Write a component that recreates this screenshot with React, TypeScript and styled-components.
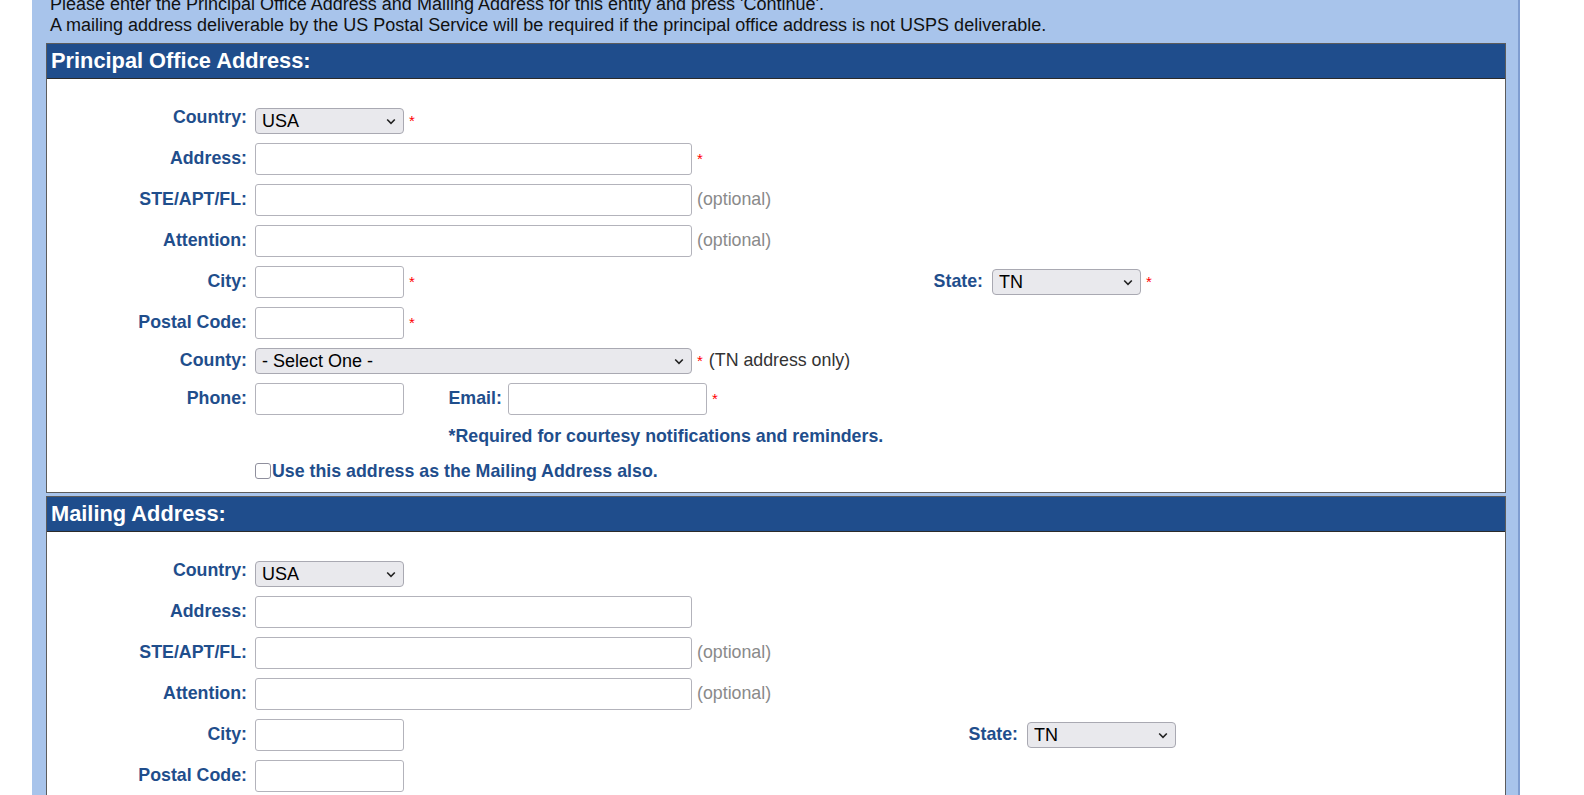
import React from 'react'
import styled, { createGlobalStyle } from 'styled-components'

const GlobalStyle = createGlobalStyle`
    html, body {
        margin: 0;
        padding: 0;
        background: #fff;
    }
    body {
        font-family: 'Liberation Sans', Arial, sans-serif;
    }
`

const Page = styled.div`
    margin-top: -6px;
    margin-left: 32px;
    width: 1488px;
    box-sizing: border-box;
    padding: 0 12px 60px 14px;
    background: #a8c4eb;
    border-right: 2px solid #7f9dd0;
`

const Intro = styled.div`
    padding-left: 4px;
    margin-bottom: 7.5px;
    font-size: 18px;
    line-height: 20.5px;
    color: #111;
`

const Section = styled.section`
    background: #fff;
    border: 1px solid #5c5c5c;
    margin-bottom: 3px;
`

const SectionHeader = styled.h2`
    margin: 0;
    height: 34px;
    line-height: 34px;
    padding-left: 4px;
    background: #1f4d8c;
    border-bottom: 1px solid #2b2b2b;
    color: #fff;
    font-size: 21.8px;
    font-weight: bold;
`

const SectionBody = styled.div`
    padding: 24.5px 0 2.5px 0;
`

const Row = styled.div<{ $h: number }>`
    display: flex;
    align-items: center;
    height: ${p => p.$h}px;
`

const Label = styled.label<{ $lift?: number }>`
    flex-shrink: 0;
    width: 208px;
    box-sizing: border-box;
    padding-right: 8px;
    text-align: right;
    font-size: 17.8px;
    font-weight: bold;
    color: #1f4e8c;
    position: relative;
    top: ${p => -(p.$lift || 0)}px;
`

const Cell = styled.div<{ $w: number }>`
    flex-shrink: 0;
    display: flex;
    align-items: center;
    width: ${p => p.$w}px;
`

const InlineLabel = styled.label<{ $w?: number }>`
    flex-shrink: 0;
    box-sizing: border-box;
    width: ${p => (p.$w ? `${p.$w}px` : 'auto')};
    padding-right: ${p => (p.$w ? 9 : 6)}px;
    text-align: right;
    font-size: 17.8px;
    font-weight: bold;
    color: #1f4e8c;
`

const TextInput = styled.input<{ $w: number }>`
    flex-shrink: 0;
    width: ${p => p.$w}px;
    height: 32px;
    box-sizing: border-box;
    margin: 0;
    border: 1px solid #b3b3bb;
    border-radius: 3px;
    background: #fff;
    font-size: 17px;
    font-family: inherit;
`

const SelectBox = styled.div<{ $w: number }>`
    position: relative;
    flex-shrink: 0;
    width: ${p => p.$w}px;
    height: 26px;
`

const Select = styled.select`
    appearance: none;
    width: 100%;
    height: 100%;
    box-sizing: border-box;
    margin: 0;
    padding: 0 24px 0 6px;
    border: 1px solid #a9a9b2;
    border-radius: 4px;
    background: #e9e9ed;
    color: #000;
    font-size: 18px;
    font-family: 'Liberation Sans', Arial, sans-serif;
`

const Chevron = styled.svg`
    position: absolute;
    right: 8px;
    top: 10px;
    width: 10px;
    height: 7px;
    pointer-events: none;
`

const Req = styled.span`
    margin-left: 5px;
    font-size: 15px;
    line-height: 1;
    color: #f00;
`

const Hint = styled.span<{ $dark?: boolean }>`
    margin-left: ${p => (p.$dark ? 6 : 5)}px;
    font-size: 17.8px;
    color: ${p => (p.$dark ? '#333' : '#8a8a8a')};
    white-space: nowrap;
`

const Note = styled.div`
    margin-left: 193.5px;
    font-size: 17.8px;
    font-weight: bold;
    color: #1f4e8c;
`

const CheckLine = styled.label`
    display: flex;
    align-items: center;
    font-size: 17.8px;
    font-weight: bold;
    color: #1f4e8c;
`

const CheckBox = styled.input`
    appearance: none;
    margin: 0 1px 0 0;
    width: 16px;
    height: 16px;
    box-sizing: border-box;
    border: 1.5px solid #8f8f9d;
    border-radius: 3px;
    background: #fff;
`

const Spacer = styled.div`
    width: 208px;
    flex-shrink: 0;
`

const Dropdown: React.FC<{ w: number; value: string; options: string[] }> = ({ w, value, options }) => (
    <SelectBox $w={w}>
        <Select defaultValue={value}>
            {options.map(o => (
                <option key={o}>{o}</option>
            ))}
        </Select>
        <Chevron viewBox="0 0 10 7">
            <path d="M1.2 1.5l3.8 3.8 3.8-3.8" fill="none" stroke="#222" strokeWidth="1.6" />
        </Chevron>
    </SelectBox>
)

interface AddressProps {
    title: string;
    required: boolean;
    stateCell: number;
    principal?: boolean;
}

const AddressSection: React.FC<AddressProps> = ({ title, required, stateCell, principal }) => (
    <Section>
        <SectionHeader>{title}</SectionHeader>
        <SectionBody>
            <Row $h={35}>
                <Label $lift={3}>Country:</Label>
                <Dropdown w={149} value="USA" options={['USA', 'Canada', 'Mexico']} />
                {required && <Req>*</Req>}
            </Row>
            <Row $h={41}>
                <Label>Address:</Label>
                <TextInput $w={437} />
                {required && <Req>*</Req>}
            </Row>
            <Row $h={41}>
                <Label>STE/APT/FL:</Label>
                <TextInput $w={437} />
                <Hint>(optional)</Hint>
            </Row>
            <Row $h={41}>
                <Label>Attention:</Label>
                <TextInput $w={437} />
                <Hint>(optional)</Hint>
            </Row>
            <Row $h={41}>
                <Label>City:</Label>
                <Cell $w={stateCell}>
                    <TextInput $w={149} />
                    {required && <Req>*</Req>}
                </Cell>
                <InlineLabel $w={100}>State:</InlineLabel>
                <Dropdown w={149} value="TN" options={['TN', 'AL', 'GA', 'KY']} />
                {required && <Req>*</Req>}
            </Row>
            <Row $h={41}>
                <Label>Postal Code:</Label>
                <TextInput $w={149} />
                {required && <Req>*</Req>}
            </Row>
            {principal && (
                <>
                    <Row $h={35}>
                        <Label>County:</Label>
                        <Dropdown w={437} value="- Select One -" options={['- Select One -', 'Davidson', 'Shelby']} />
                        <Req>*</Req>
                        <Hint $dark>(TN address only)</Hint>
                    </Row>
                    <Row $h={41}>
                        <Label>Phone:</Label>
                        <Cell $w={193.5}>
                            <TextInput $w={149} />
                        </Cell>
                        <InlineLabel>Email:</InlineLabel>
                        <TextInput $w={199} />
                        <Req>*</Req>
                    </Row>
                    <Row $h={34}>
                        <Spacer />
                        <Note>*Required for courtesy notifications and reminders.</Note>
                    </Row>
                    <Row $h={36}>
                        <Spacer />
                        <CheckLine>
                            <CheckBox type="checkbox" />
                            Use this address as the Mailing Address also.
                        </CheckLine>
                    </Row>
                </>
            )}
        </SectionBody>
    </Section>
)

const App: React.FC = () => {
    return (
        <>
            <GlobalStyle />
            <Page>
                <Intro>
                    Please enter the Principal Office Address and Mailing Address for this entity and press 'Continue'.
                    <br />
                    A mailing address deliverable by the US Postal Service will be required if the principal office address is not USPS deliverable.
                </Intro>
                <AddressSection title="Principal Office Address:" required stateCell={637} principal />
                <AddressSection title="Mailing Address:" required={false} stateCell={672} />
            </Page>
        </>
    )
}

export default App
